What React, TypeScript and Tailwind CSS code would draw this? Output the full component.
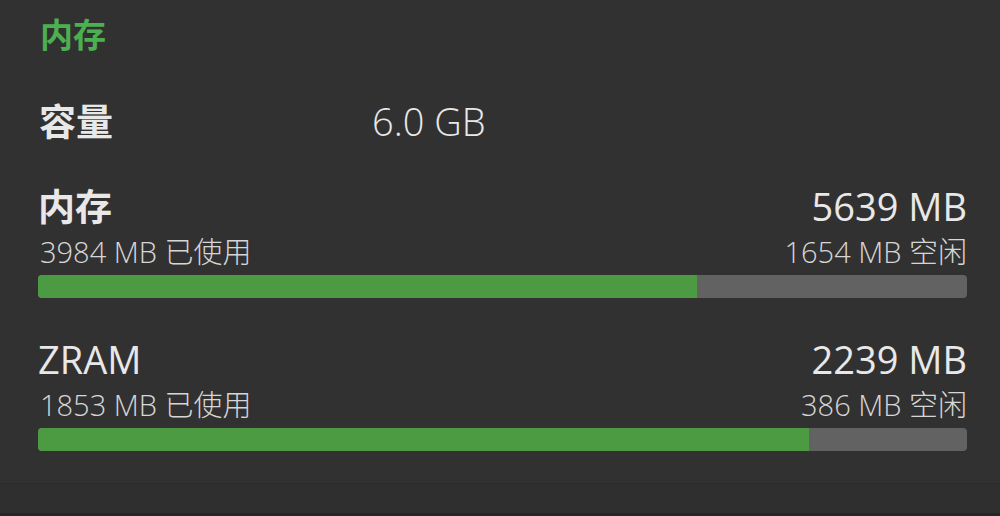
import React from "react";

const font = { fontFamily: '"Open Sans", "Noto Sans CJK SC", sans-serif' };

function Block({ title, total, used, free, pct, latin }: { title: string; total: string; used: string; free: string; pct: number; latin?: boolean }) {
  return (
    <div className="flex flex-col">
      <div className="flex h-[44px] items-center justify-between text-[#e8e8e8]">
        <span className={latin ? "text-[38px] font-normal leading-none" : "text-[37px] font-bold leading-none"}>{title}</span>
        <span className="text-[38px] font-medium leading-none">{total}</span>
      </div>
      <div className="mt-[5px] flex h-[36px] items-center justify-between text-[29px] font-light leading-none text-[#d6d6d6]">
        <span className="pl-[2px]">{used}</span>
        <span>{free}</span>
      </div>
      <div className="mt-[6px] flex h-[23px] w-full overflow-hidden rounded-[4px] bg-[#626262]">
        <div className="h-full bg-[#4c9a42]" style={{ width: `${pct}%` }} />
      </div>
    </div>
  );
}

export default function App() {
  return (
    <div className="flex h-[516px] w-[1000px] flex-col bg-[#323131]" style={font}>
      <div className="flex h-[484px] flex-col border-b border-[#2b2b2b] pl-[38px] pr-[33px]">
        <div className="flex h-[68px] items-center">
          <span className="pl-[2px] text-[33px] font-bold leading-none text-[#4caf50]">内存</span>
        </div>
        <div className="flex h-[106px] items-center text-[#e8e8e8]">
          <span className="w-[334px] pl-[1px] text-[37px] font-bold leading-none">容量</span>
          <span className="text-[38px] font-light leading-none">6.0 GB</span>
        </div>
        <div className="mt-[10px] flex flex-col gap-[39px]">
          <Block title="内存" total="5639 MB" used="3984 MB 已使用" free="1654 MB 空闲" pct={70.9} />
          <Block title="ZRAM" total="2239 MB" used="1853 MB 已使用" free="386 MB 空闲" pct={83} latin />
        </div>
      </div>
      <div className="flex-1 border-b-[3px] border-[#262626] bg-[#2f2f2f]" />
    </div>
  );
}
